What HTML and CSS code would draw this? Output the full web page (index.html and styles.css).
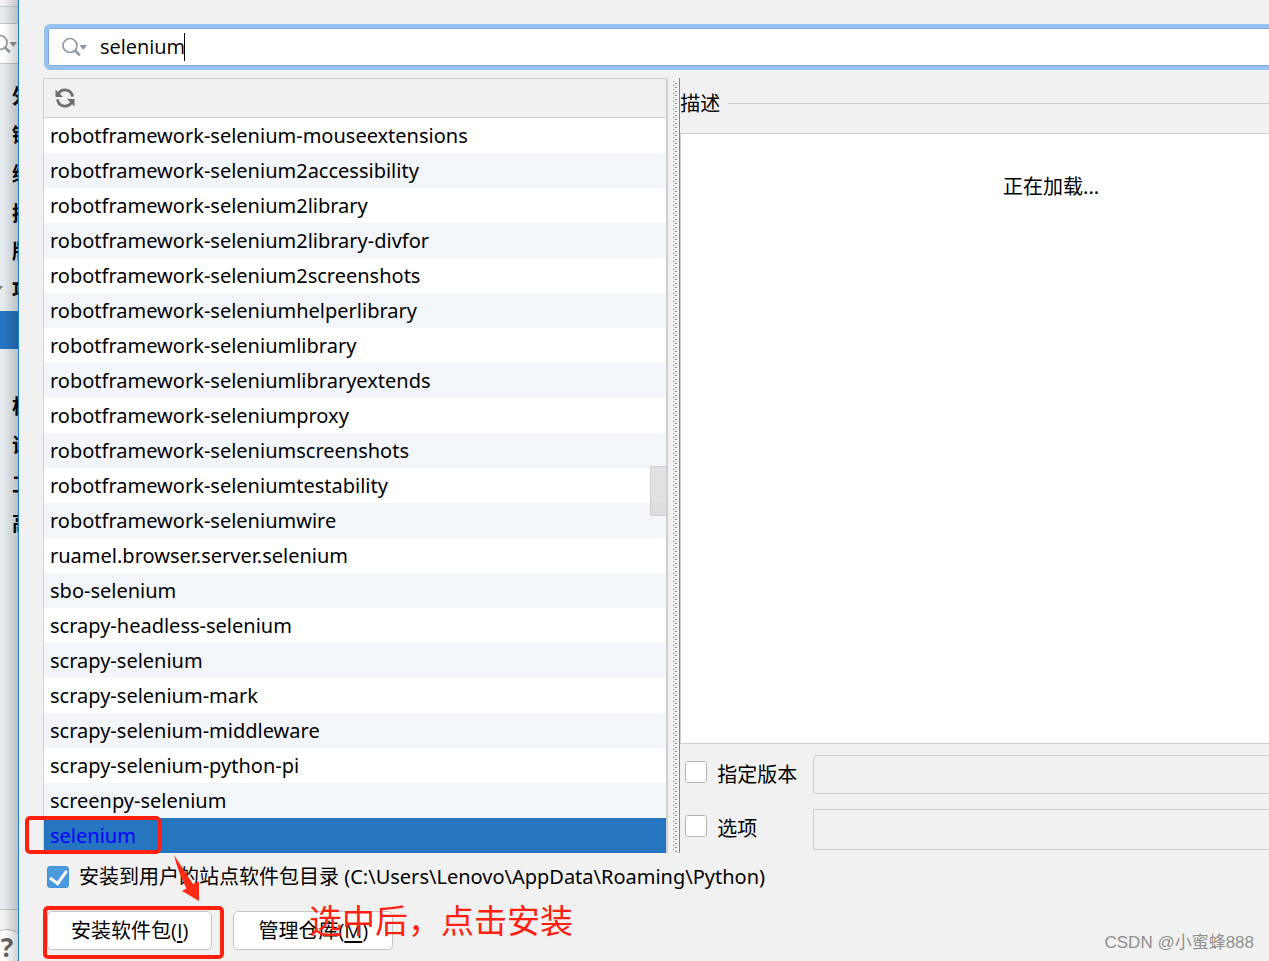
FILE: index.html
```html
<!DOCTYPE html>
<html lang="zh-CN">
<head>
<meta charset="utf-8">
<title>可用软件包</title>
<link rel="stylesheet" href="styles.css">
</head>
<body>
<svg class="defs" aria-hidden="true">
  <symbol id="search" viewBox="0 0 26 20">
    <circle cx="8" cy="8.500" r="7" fill="none" stroke="#919ba3" stroke-width="1.700"/>
    <path d="M13 13.500l4.800 4.800" stroke="#919ba3" stroke-width="2.600"/>
    <path d="M17.500 8h7.500l-3.750 5z" fill="#8a949c"/>
  </symbol>
</svg>
<aside class="settings">
  <div class="settings-top"></div>
  <div class="settings-search"><svg class="search-icon"><use href="#search"/></svg></div>
  <nav class="settings-nav">
    <div class="nav-item">外观与行为</div>
    <div class="nav-item">键盘映射</div>
    <div class="nav-item">编辑器</div>
    <div class="nav-item">插件</div>
    <div class="nav-item">版本控制</div>
    <div class="nav-item nav-open">项目</div>
    <div class="nav-item nav-selected"></div>
    <div class="nav-item"></div>
    <div class="nav-item">构建、执行、部署</div>
    <div class="nav-item">语言和框架</div>
    <div class="nav-item">工具</div>
    <div class="nav-item">高级设置</div>
  </nav>
  <div class="settings-foot"><button class="help" type="button" aria-label="帮助">?</button></div>
</aside>
<main class="dialog">
  <div class="search">
    <svg class="search-icon" aria-hidden="true"><use href="#search"/></svg>
    <input class="search-input" type="text" value="selenium" aria-label="搜索">
    <span class="caret"></span>
  </div>
  <div class="panes">
    <section class="packages">
      <div class="toolbar">
        <button class="refresh" type="button" aria-label="刷新">
          <svg viewBox="0 0 20 20" width="20" height="20">
            <path d="M3.500 5.500A7.600 7.600 0 0 1 17.500 8.700M16.500 14.500A7.600 7.600 0 0 1 2.500 11.300" fill="none" stroke="#6e6e6e" stroke-width="2.800"/>
            <path d="M.5 1.500v7.500h7.500zM19.500 18.500v-7.500h-7.500z" fill="#6e6e6e"/>
          </svg>
        </button>
      </div>
      <div class="list-wrap">
        <ul class="list">
          <li>robotframework-selenium-mouseextensions</li>
          <li>robotframework-selenium2accessibility</li>
          <li>robotframework-selenium2library</li>
          <li>robotframework-selenium2library-divfor</li>
          <li>robotframework-selenium2screenshots</li>
          <li>robotframework-seleniumhelperlibrary</li>
          <li>robotframework-seleniumlibrary</li>
          <li>robotframework-seleniumlibraryextends</li>
          <li>robotframework-seleniumproxy</li>
          <li>robotframework-seleniumscreenshots</li>
          <li>robotframework-seleniumtestability</li>
          <li>robotframework-seleniumwire</li>
          <li>ruamel.browser.server.selenium</li>
          <li>sbo-selenium</li>
          <li>scrapy-headless-selenium</li>
          <li>scrapy-selenium</li>
          <li>scrapy-selenium-mark</li>
          <li>scrapy-selenium-middleware</li>
          <li>scrapy-selenium-python-pi</li>
          <li>screenpy-selenium</li>
          <li class="selected">selenium<span class="mark mark-row"></span></li>
        </ul>
        <span class="thumb"></span>
      </div>
    </section>
    <div class="splitter"></div>
    <section class="details">
      <h2 class="details-title">描述</h2>
      <div class="description">正在加载...</div>
      <div class="options">
        <input class="check" type="checkbox" id="version">
        <label for="version">指定版本</label>
        <input class="field field-round" type="text" aria-label="版本" disabled>
        <input class="check" type="checkbox" id="opts">
        <label for="opts">选项</label>
        <input class="field" type="text" aria-label="选项" disabled>
      </div>
    </section>
  </div>
  <div class="user-site">
    <input class="check" type="checkbox" id="site" checked>
    <label for="site">安装到用户的站点软件包目录 (C:\Users\Lenovo\AppData\Roaming\Python)</label>
    <svg class="arrow" viewBox="0 0 30 48" aria-hidden="true"><path d="M1 1L20 30L26 27.500V47L9 37L13.500 34.500Q5 18 1 1z" fill="#ff2a14"/></svg>
  </div>
  <div class="actions">
    <button class="btn btn-install" type="button">安装软件包(<u>I</u>)<span class="mark mark-button"></span></button>
    <button class="btn btn-manage" type="button">管理仓库(<u>M</u>)</button>
    <span class="note">选中后，点击安装</span>
  </div>
  <span class="watermark">CSDN @小蜜蜂888</span>
</main>
</body>
</html>
```
FILE: styles.css
```css
* { box-sizing: border-box; }
body {
  margin: 0;
  min-height: 100vh;
  display: flex;
  overflow: hidden;
  background: #f1f1f1;
  color: #000;
  font: 20px/26px "Noto Sans", "Noto Sans CJK SC", sans-serif;
}
input, button { font: inherit; color: inherit; }
.defs { position: absolute; width: 0; height: 0; }
.search-icon { width: 26px; height: 20px; flex: none; }

/* settings window behind the dialog */
.settings {
  position: relative;
  flex: none;
  width: 18px;
  overflow: hidden;
  display: flex;
  flex-direction: column;
  background: #e5eaef;
}
.settings::after {
  content: "";
  position: absolute;
  inset: 0;
  background: linear-gradient(to right, rgba(0,0,0,0) 20%, rgba(0,0,0,.18));
}
.settings-top { height: 7px; background: #f1f1f1; border-bottom: 1px solid #c9cdd0; }
.settings-search {
  margin-top: 16px;
  height: 41px;
  display: flex;
  justify-content: flex-end;
  align-items: center;
  background: #fff;
  border: solid #c4c8cb;
  border-width: 1px 0;
}
.settings-nav {
  margin-top: 14px;
  height: 465px;
  display: grid;
  grid-template-rows: repeat(12, 1fr);
}
.nav-item {
  display: flex;
  align-items: center;
  padding-left: 12px;
  font-weight: 700;
  white-space: nowrap;
}
.nav-open { position: relative; }
.nav-open::before {
  content: "";
  position: absolute;
  left: -5px;
  top: 14px;
  border: 4px solid transparent;
  border-top-color: #777;
  border-width: 5px 4px 0;
}
.nav-selected { background: #2675bf; }
.settings-foot {
  margin-top: auto;
  height: 52px;
  padding-top: 19px;
  background: #f1f1f1;
  border-top: 1px solid #c4c4c4;
  display: flex;
  justify-content: flex-end;
}
.help {
  flex: none;
  width: 36px;
  height: 36px;
  margin-right: -7px;
  padding: 0;
  border: 1px solid #bbb;
  border-radius: 50%;
  background: #fff;
  color: #666;
  font-size: 26px;
  font-weight: 700;
}

/* package dialog */
.dialog {
  position: relative;
  flex: 1;
  min-width: 0;
  padding: 24px 0 0 24px;
  border-left: 1px solid #1a80d0;
  display: flex;
  flex-direction: column;
}
.search {
  position: relative;
  height: 46px;
  margin: 0 -8px 0 1px;
  padding-left: 14px;
  display: flex;
  align-items: center;
  gap: 12px;
  background: #fff;
  border: 4px solid #97c3f3;
  border-radius: 6px;
  box-shadow: inset 0 0 0 1px #7fa9d8;
}
.search-input {
  flex: 1;
  min-width: 0;
  padding: 0;
  border: 0;
  outline: 0;
  background: none;
  font-family: "Open Sans", sans-serif;
}
.caret { position: absolute; left: 136px; top: 5px; width: 1px; height: 28px; background: #000; }

.panes { display: flex; margin-top: 8px; }
.packages {
  flex: none;
  width: 51%;
  min-width: 0;
  border: 1px solid #cfcfcf;
  border-bottom: 0;
  border-right-width: 2px;
}
.toolbar { height: 39px; padding-left: 11px; display: flex; align-items: center; border-bottom: 1px solid #cfcfcf; }
.refresh { display: flex; padding: 0; border: 0; background: none; }
.list-wrap { position: relative; }
.list { margin: 0; padding: 0; list-style: none; background: #fff; }
.list li { height: 35px; padding: 0 6px; line-height: 35px; white-space: nowrap; }
.list li:nth-child(even) { background: #f2f5fa; }
.list .selected { position: relative; background: #2675bf; color: #00f; }
.thumb {
  position: absolute;
  right: 0;
  top: 348px;
  width: 16px;
  height: 50px;
  background: rgba(200,200,200,.55);
  border: 1px solid #d0d0d4;
  border-right: 0;
}
.splitter {
  flex: none;
  width: 12px;
  border-right: 1px solid #7b858f;
  background:
    repeating-linear-gradient(#7b8b9b 0 1px, transparent 1px 4px) 5px 3px / 1px 100% no-repeat,
    repeating-linear-gradient(#7b8b9b 0 1px, transparent 1px 4px) 7px 5px / 2px 100% no-repeat,
    repeating-linear-gradient(#fff 0 1px, transparent 1px 4px) 3px 2px / 2px 100% no-repeat,
    #f1f1f1;
}
.details { flex: 1; min-width: 0; display: flex; flex-direction: column; }
.details-title {
  height: 55px;
  margin: 0;
  padding-bottom: 4px;
  display: flex;
  align-items: center;
  gap: 8px;
  font-size: 20px;
  font-weight: 400;
}
.details-title::after { content: ""; flex: 1; height: 1px; background: #cfcfcf; }
.description {
  flex: 1;
  padding: 40px 0 0 152px;
  text-align: center;
  background: #fff;
  border: solid #cfcfcf;
  border-width: 1px 0 1px 1px;
}
.options {
  height: 109px;
  padding: 11px 0 3px 5px;
  display: grid;
  grid-template-columns: 22px 86px 1fr;
  grid-template-rows: 39px 41px;
  column-gap: 10px;
  row-gap: 15px;
}
.options .check { margin-top: 6px; }
.options label { padding-top: 7px; }
.check {
  appearance: none;
  flex: none;
  width: 22px;
  height: 22px;
  margin: 0;
  background: #fff;
  border: 1px solid #b4b4b4;
  border-radius: 3px;
}
.check:checked {
  border-color: #4292d8;
  background: #4b9ae0;
  display: grid;
  place-items: center;
}
.check:checked::after {
  content: "";
  width: 8px;
  height: 14px;
  margin-bottom: 5px;
  border: solid #fff;
  border-width: 0 3px 3px 0;
  transform: rotate(36deg);
}
.field {
  width: 100%;
  min-width: 0;
  border: 1px solid #cfcfcf;
  border-right: 0;
  background: #f1f1f1;
}
.field-round { border-radius: 4px 0 0 4px; }

.user-site {
  position: relative;
  margin-top: 11px;
  padding-left: 4px;
  display: flex;
  align-items: center;
  gap: 10px;
}
.arrow { position: absolute; left: 130px; top: -10px; width: 30px; height: 48px; z-index: 2; }
.actions { position: relative; margin-top: 21px; padding-left: 4px; display: flex; gap: 21px; }
.btn {
  position: relative;
  height: 39px;
  padding: 0 24px;
  white-space: nowrap;
  background: #fff;
  border: 1px solid #c4c4c4;
  border-radius: 5px;
  font-family: "Open Sans", "Noto Sans CJK SC", sans-serif;
}
.btn-install { padding: 0 23px; }
.btn u { text-underline-offset: 3px; }
.mark { position: absolute; border: 4px solid #ff2010; border-radius: 5px; }
.mark-row { left: -19px; top: -2px; width: 136px; height: 38px; }
.mark-button { inset: -6px -13px -10px -5px; }
.note {
  position: absolute;
  left: 266px;
  top: -12px;
  color: #ff2010;
  font-size: 33px;
  line-height: 44px;
  white-space: nowrap;
}
.watermark {
  position: absolute;
  right: 15px;
  bottom: 6px;
  color: #909090;
  font: 17px/24px "Liberation Sans", "Noto Sans CJK SC", sans-serif;
}
```
